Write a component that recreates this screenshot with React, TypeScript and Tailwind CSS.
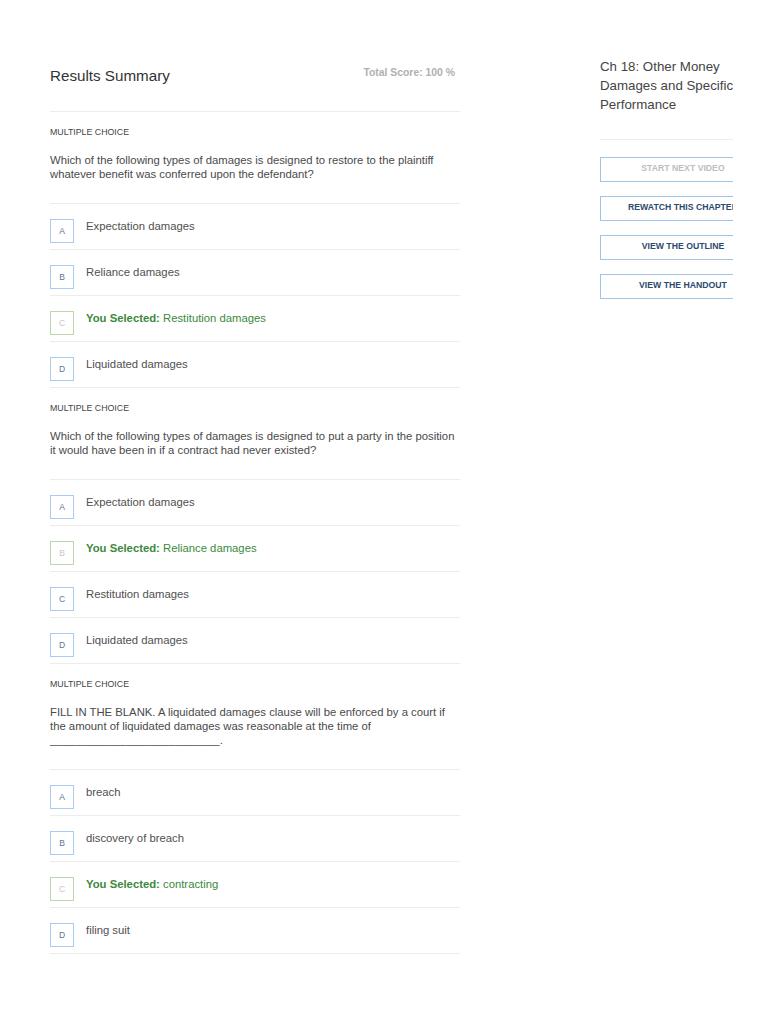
import React from "react";

type Option = { letter: string; text: string; selected?: boolean };
type Question = { prompt: React.ReactNode; options: Option[] };

const questions: Question[] = [
  {
    prompt:
      "Which of the following types of damages is designed to restore to the plaintiff whatever benefit was conferred upon the defendant?",
    options: [
      { letter: "A", text: "Expectation damages" },
      { letter: "B", text: "Reliance damages" },
      { letter: "C", text: "Restitution damages", selected: true },
      { letter: "D", text: "Liquidated damages" },
    ],
  },
  {
    prompt:
      "Which of the following types of damages is designed to put a party in the position it would have been in if a contract had never existed?",
    options: [
      { letter: "A", text: "Expectation damages" },
      { letter: "B", text: "Reliance damages", selected: true },
      { letter: "C", text: "Restitution damages" },
      { letter: "D", text: "Liquidated damages" },
    ],
  },
  {
    prompt: (
      <>
        FILL IN THE BLANK. A liquidated damages clause will be enforced by a court if the amount of
        liquidated damages was reasonable at the time of
        <br />
        ___________________________.
      </>
    ),
    options: [
      { letter: "A", text: "breach" },
      { letter: "B", text: "discovery of breach" },
      { letter: "C", text: "contracting", selected: true },
      { letter: "D", text: "filing suit" },
    ],
  },
];

const OptionRow = ({ option }: { option: Option }) => (
  <div className="flex items-start border-b border-[#ececec] pt-[15px] pb-[6px]">
    <div
      className={`flex h-6 w-6 shrink-0 items-center justify-center border text-[8.5px] ${
        option.selected
          ? "border-[#bcd8a8] text-[#c8c8c8]"
          : "border-[#a9cdf0] text-[#55789a]"
      }`}
    >
      {option.letter}
    </div>
    <div className="ml-3 text-[11.3px] leading-[14px]">
      {option.selected ? (
        <span className="text-[#3b8a3b]">
          <span className="font-bold">You Selected:</span> {option.text}
        </span>
      ) : (
        <span className="text-[#505050]">{option.text}</span>
      )}
    </div>
  </div>
);

const QuestionBlock = ({ q }: { q: Question }) => (
  <div>
    <div className="border-b border-[#ececec] pb-[22px]">
      <div className="mt-[15px] text-[8.8px] leading-[11px] text-[#444]">MULTIPLE CHOICE</div>
      <div className="mt-[15px] text-[11.3px] leading-[14px] text-[#4a4a4a]">{q.prompt}</div>
    </div>
    {q.options.map((o) => (
      <OptionRow key={o.letter} option={o} />
    ))}
  </div>
);

const sideButtons = [
  { label: "START NEXT VIDEO", muted: true },
  { label: "REWATCH THIS CHAPTER" },
  { label: "VIEW THE OUTLINE" },
  { label: "VIEW THE HANDOUT" },
];

export default function App() {
  return (
    <div
      className="min-h-[1024px] w-[768px] bg-white"
      style={{ fontFamily: '"Liberation Sans", Arial, sans-serif' }}
    >
      <div className="flex pt-[67px] pl-[50px]">
        {/* Results column */}
        <div className="w-[410px]">
          <div className="flex items-start justify-between border-b border-[#ececec] pb-[26px]">
            <h1 className="text-[15.2px] leading-[18px] text-[#333]">Results Summary</h1>
            <div className="mr-[5px] text-[10.4px] leading-[12px] font-bold text-[#b0b0b0]">
              Total Score: 100 %
            </div>
          </div>
          {questions.map((q, i) => (
            <QuestionBlock key={i} q={q} />
          ))}
        </div>

        {/* Sidebar */}
        <div className="ml-[140px] -mt-[10.5px] w-[133px] overflow-hidden">
          <div className="w-[166px] border-b border-[#ececec] pb-[25px]">
            <div className="text-[13.3px] leading-[19px] whitespace-nowrap text-[#444]">
              Ch 18: Other Money
              <br />
              Damages and Specific
              <br />
              Performance
            </div>
          </div>
          <div className="mt-[17px] flex flex-col gap-[14px]">
            {sideButtons.map((b) => (
              <div
                key={b.label}
                className={`flex h-[25px] w-[166px] items-center justify-center border border-[#9fc4ea] text-[8.7px] font-bold whitespace-nowrap ${
                  b.muted ? "text-[#bdbdbd]" : "text-[#2b4a6e]"
                }`}
              >
                {b.label}
              </div>
            ))}
          </div>
        </div>
      </div>
    </div>
  );
}
